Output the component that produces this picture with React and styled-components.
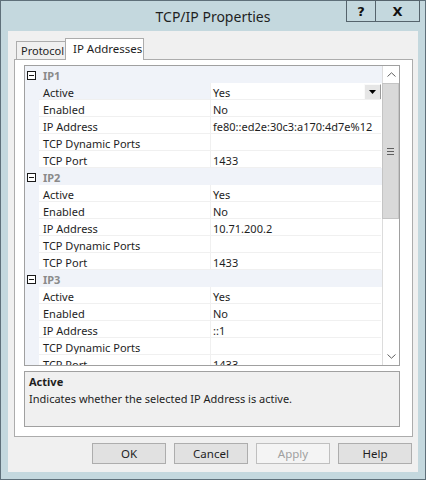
import React from "react"
import styled, { createGlobalStyle } from "styled-components"

const GlobalStyle = createGlobalStyle`
  html, body {
    margin: 0;
    padding: 0;
    background: #c4d8de;
  }
  * {
    box-sizing: border-box;
  }
`

const FONT = `"Noto Sans", "Open Sans", sans-serif`

const groups = [
  { name: "IP1", address: "fe80::ed2e:30c3:a170:4d7e%12" },
  { name: "IP2", address: "10.71.200.2" },
  { name: "IP3", address: "::1" },
]

const App = () => {
  return (
    <>
      <GlobalStyle />
      <Window>
        <TitleBar>
          <span />
          <Title>TCP/IP Properties</Title>
          <Controls>
            <CaptionButton width={30}>?</CaptionButton>
            <CaptionButton width={45}>X</CaptionButton>
          </Controls>
        </TitleBar>
        <Client>
          <TabRow>
            <Tab>Protocol</Tab>
            <Tab active>IP Addresses</Tab>
          </TabRow>
          <Panel>
            <Grid>
              <GridBody>
                {groups.map((g, gi) => (
                  <React.Fragment key={g.name}>
                    <CategoryRow>
                      <Gutter>
                        <MinusBox />
                      </Gutter>
                      <CategoryLabel>{g.name}</CategoryLabel>
                    </CategoryRow>
                    <PropRow>
                      <Gutter />
                      <NameCell selected={gi === 0}>Active</NameCell>
                      <ValueCell>
                        Yes
                        {gi === 0 && (
                          <DropButton>
                            <svg width="7" height="4" viewBox="0 0 7 4">
                              <path d="M0 0h7L3.5 4z" fill="#000" />
                            </svg>
                          </DropButton>
                        )}
                      </ValueCell>
                    </PropRow>
                    <PropRow>
                      <Gutter />
                      <NameCell>Enabled</NameCell>
                      <ValueCell>No</ValueCell>
                    </PropRow>
                    <PropRow>
                      <Gutter />
                      <NameCell>IP Address</NameCell>
                      <ValueCell>{g.address}</ValueCell>
                    </PropRow>
                    <PropRow>
                      <Gutter />
                      <NameCell>TCP Dynamic Ports</NameCell>
                      <ValueCell />
                    </PropRow>
                    <PropRow>
                      <Gutter />
                      <NameCell>TCP Port</NameCell>
                      <ValueCell>1433</ValueCell>
                    </PropRow>
                  </React.Fragment>
                ))}
              </GridBody>
              <ScrollBar>
                <ScrollArrow>
                  <svg width="9" height="5" viewBox="0 0 9 5">
                    <path d="M0.5 4.5L4.5 0.8L8.5 4.5" fill="none" stroke="#606060" />
                  </svg>
                </ScrollArrow>
                <Thumb>
                  <svg width="7" height="7" viewBox="0 0 7 7">
                    <path d="M0 0.5h7M0 3.5h7M0 6.5h7" stroke="#606060" />
                  </svg>
                </Thumb>
                <Track />
                <ScrollArrow>
                  <svg width="9" height="5" viewBox="0 0 9 5">
                    <path d="M0.5 0.5L4.5 4.2L8.5 0.5" fill="none" stroke="#606060" />
                  </svg>
                </ScrollArrow>
              </ScrollBar>
            </Grid>
            <Description>
              <DescTitle>Active</DescTitle>
              <DescText>Indicates whether the selected IP Address is active.</DescText>
            </Description>
          </Panel>
          <ButtonRow>
            <Button>OK</Button>
            <Button>Cancel</Button>
            <Button disabled>Apply</Button>
            <Button>Help</Button>
          </ButtonRow>
        </Client>
      </Window>
    </>
  )
}

export default App

const Window = styled.div`
  width: 426px;
  height: 480px;
  border: 1px solid #5f707a;
  background: #c4d8de;
  display: flex;
  flex-direction: column;
  font-family: ${FONT};
  font-size: 11px;
  color: #1e1e1e;
`
const TitleBar = styled.div`
  height: 30px;
  display: grid;
  grid-template-columns: 1fr auto 1fr;
  align-items: start;
`
const Title = styled.div`
  font-size: 14px;
  line-height: 30px;
  color: #1f1f1f;
  padding-top: 1px;
`
const Controls = styled.div`
  justify-self: end;
  display: flex;
  margin-right: 5px;
  margin-top: -1px;
`
const CaptionButton = styled.div`
  width: ${p => p.width}px;
  height: 22px;
  border: 1px solid #55636c;
  margin-left: -1px;
  display: flex;
  align-items: center;
  justify-content: center;
  font-family: "DejaVu Sans", sans-serif;
  font-weight: bold;
  font-size: 13px;
  color: #111;
`
const Client = styled.div`
  flex: 1;
  margin: 0 7px 7px 7px;
  background: #f0f0f0;
  padding: 7px 5px 8px 6px;
  display: flex;
  flex-direction: column;
`
const TabRow = styled.div`
  display: flex;
  align-items: flex-end;
  height: 22px;
  padding-left: 2px;
  margin-bottom: -1px;
  position: relative;
  z-index: 1;
`
const Tab = styled.div`
  height: ${p => (p.active ? 22 : 18)}px;
  margin-bottom: ${p => (p.active ? 0 : 1)}px;
  margin-left: ${p => (p.active ? -1 : 0)}px;
  width: ${p => (p.active ? 79 : 50)}px;
  padding-left: ${p => (p.active ? 7 : 4)}px;
  border: 1px solid #acacac;
  border-bottom: none;
  background: ${p => (p.active ? "#fff" : "#f0f0f0")};
  line-height: ${p => (p.active ? 19 : 17)}px;
  font-size: ${p => (p.active ? 11.5 : 11)}px;
  white-space: nowrap;
`
const Panel = styled.div`
  height: 378px;
  background: #fff;
  border: 1px solid #acacac;
  padding: 5px 12px 9px 9px;
  display: flex;
  flex-direction: column;
`
const Grid = styled.div`
  height: 301px;
  border: 1px solid #a0a0a0;
  display: flex;
  overflow: hidden;
`
const GridBody = styled.div`
  flex: 1;
  min-width: 0;
  overflow: hidden;
`
const RowBase = styled.div`
  height: 17px;
  display: grid;
  grid-template-columns: 14px 172px 170px;
  line-height: 17px;
  white-space: nowrap;
`
const CategoryRow = styled(RowBase)`
  background: #f0f3f9;
`
const PropRow = styled(RowBase)``
const Gutter = styled.div`
  background: #f0f3f9;
  display: flex;
  align-items: center;
  padding-left: 2px;
`
const MinusBox = styled.div`
  width: 9px;
  height: 9px;
  border: 1px solid #1a1a1a;
  background: #fff;
  position: relative;
  &::after {
    content: "";
    position: absolute;
    left: 1px;
    right: 1px;
    top: 3px;
    height: 1px;
    background: #1a1a1a;
  }
`
const CategoryLabel = styled.div`
  grid-column: 2 / 4;
  padding-left: 4px;
  padding-top: 1px;
  font-weight: bold;
  color: #8a8a8a;
`
const NameCell = styled.div`
  background: ${p => (p.selected ? "#f0f3f9" : "#fff")};
  border-right: 1px solid #f0f0f0;
  border-bottom: 1px solid #f0f0f0;
  padding-left: 4px;
  padding-top: 1px;
  overflow: hidden;
`
const ValueCell = styled.div`
  background: #fff;
  border-bottom: 1px solid #f0f0f0;
  padding-left: 2px;
  padding-top: 1px;
  display: flex;
  justify-content: space-between;
  align-items: flex-start;
  overflow: hidden;
`
const DropButton = styled.div`
  width: 17px;
  height: 16px;
  background: #e6e6e6;
  border-top: 1px solid #fafafa;
  border-left: 1px solid #fafafa;
  border-right: 1px solid #9a9a9a;
  border-bottom: 1px solid #9a9a9a;
  display: flex;
  align-items: center;
  justify-content: center;
  margin-top: 0;
`
const ScrollBar = styled.div`
  width: 17px;
  display: flex;
  flex-direction: column;
  border-left: 1px solid #dcdcdc;
`
const ScrollArrow = styled.div`
  height: 17px;
  background: #fff;
  display: flex;
  align-items: center;
  justify-content: center;
`
const Thumb = styled.div`
  height: 136px;
  background: #d9d9d9;
  border: 1px solid #c4c4c4;
  margin-left: -1px;
  display: flex;
  align-items: center;
  justify-content: center;
`
const Track = styled.div`
  flex: 1;
  background: #fff;
`
const Description = styled.div`
  margin-top: 5px;
  height: 56px;
  background: #f0f0f0;
  border: 1px solid #a0a0a0;
  padding: 1px 4px;
  line-height: 17px;
`
const DescTitle = styled.div`
  font-weight: bold;
`
const DescText = styled.div`
  font-size: 11px;
`
const ButtonRow = styled.div`
  display: flex;
  justify-content: flex-end;
  gap: 8px;
  margin-top: 6px;
  padding-right: 1px;
`
const Button = styled.button`
  width: 74px;
  height: 21px;
  font-family: ${FONT};
  font-size: 11.5px;
  background: ${p => (p.disabled ? "#f4f4f4" : "#e1e1e1")};
  border: 1px solid ${p => (p.disabled ? "#bfbfbf" : "#adadad")};
  color: ${p => (p.disabled ? "#a0a0a0" : "#1e1e1e")};
  padding: 0;
`
